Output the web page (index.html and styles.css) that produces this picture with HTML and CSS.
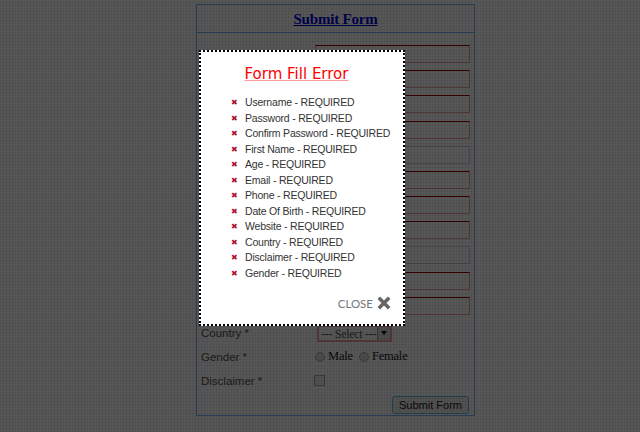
FILE: index.html
```html
<!DOCTYPE html>
<html lang="en">
<head>
    <meta charset="UTF-8">
    <title>Submit Form</title>
    <link rel="stylesheet" href="styles.css">
</head>
<body>
    <form class="signup">
        <h2 class="signup-title"><u>Submit Form</u></h2>
        <div class="fields">
            <label class="row"><span>Username *</span><input type="text" class="invalid"></label>
            <label class="row"><span>Password *</span><input type="text" class="invalid"></label>
            <label class="row"><span>Confirm Password *</span><input type="text" class="invalid"></label>
            <label class="row"><span>First Name *</span><input type="text" class="invalid"></label>
            <label class="row"><span>Last Name</span><input type="text"></label>
            <label class="row"><span>Age *</span><input type="text" class="invalid"></label>
            <label class="row"><span>Email *</span><input type="text" class="invalid"></label>
            <label class="row"><span>Phone *</span><input type="text" class="invalid"></label>
            <label class="row"><span>Address</span><input type="text"></label>
            <label class="row"><span>Date Of Birth *</span><input type="text" class="invalid"></label>
            <label class="row"><span>Website *</span><input type="text" class="invalid"></label>
            <label class="row row-country"><span>Country *</span>
                <div class="select">
                    <select><option>--- Select ---</option></select>
                    <i class="select-arrow"></i>
                </div>
            </label>
            <div class="row row-short"><span>Gender *</span>
                <div class="radios">
                    <input type="radio" name="gender" id="male"><label for="male">Male</label>
                    <input type="radio" name="gender" id="female"><label for="female">Female</label>
                </div>
            </div>
            <label class="row row-short"><span>Disclaimer *</span><input type="checkbox" class="agree"></label>
        </div>
        <div class="actions"><button type="button">Submit Form</button></div>
    </form>

    <div class="overlay">
        <div class="modal">
            <h3 class="modal-title">Form Fill Error</h3>
            <ul class="errors">
                <li>Username - REQUIRED</li>
                <li>Password - REQUIRED</li>
                <li>Confirm Password - REQUIRED</li>
                <li>First Name - REQUIRED</li>
                <li>Age - REQUIRED</li>
                <li>Email - REQUIRED</li>
                <li>Phone - REQUIRED</li>
                <li>Date Of Birth - REQUIRED</li>
                <li>Website - REQUIRED</li>
                <li>Country - REQUIRED</li>
                <li>Disclaimer - REQUIRED</li>
                <li>Gender - REQUIRED</li>
            </ul>
            <div class="modal-close">
                CLOSE
                <svg width="14" height="14" viewBox="0 0 14 14"><path d="M1.8 1.8l10.4 10.4M12.2 1.8L1.8 12.2" stroke="#666" stroke-width="3.6"/></svg>
            </div>
        </div>
    </div>
</body>
</html>
```

FILE: styles.css
```css
html, body {
    margin: 0;
    height: 100%;
    overflow: hidden;
}

body {
    background: #fff;
    font-family: "Liberation Serif", serif;
}

.signup {
    width: 277px;
    height: 410px;
    margin: 4px 0 0 196px;
    border: 1px solid #7ab4ff;
}

.signup-title {
    margin: 0;
    height: 27px;
    border-bottom: 1px solid #7ab4ff;
    text-align: center;
    font-size: 15px;
    letter-spacing: -0.2px;
    line-height: 29px;
    color: #0000e0;
}

.fields {
    padding-top: 8.4px;
}

.row {
    display: flex;
    align-items: center;
    height: 25.2px;
    padding-left: 4px;
    font-family: "Liberation Sans", sans-serif;
    font-size: 11.5px;
    color: #555;
}

.row-country {
    height: 23.2px;
    padding-top: 3px;
}

.row-short {
    height: 24px;
}

.row > span {
    width: 114px;
    flex: none;
}

.row input[type=text] {
    width: 155px;
    height: 18px;
    box-sizing: border-box;
    border: 1px solid #ccc;
    padding: 0;
}

.row input.invalid {
    border: 1px solid #f3a0a0;
    border-top-color: #900;
}

.select {
    display: flex;
    width: 75px;
    height: 17px;
    margin-left: 2px;
    box-sizing: border-box;
    border: 2px solid #f3a0a0;
    background: #fff;
}

.select select {
    flex: 1;
    min-width: 0;
    padding: 0 0 0 2px;
    border: 0;
    appearance: none;
    background: #fff;
    font-family: "Liberation Serif", serif;
    font-size: 12px;
    letter-spacing: -0.3px;
    color: #555;
}

.select-arrow {
    display: flex;
    flex: none;
    align-items: center;
    justify-content: center;
    width: 12px;
    border-left: 1px solid #999;
    background: #ddd;
}

.select-arrow::after {
    content: "";
    border: 3px solid transparent;
    border-top: 4px solid #000;
    border-bottom: 0;
}

.radios {
    display: flex;
    align-items: center;
    font-family: "Liberation Serif", serif;
    font-size: 12.5px;
    letter-spacing: -0.2px;
    color: #222;
}

.radios input {
    width: 10px;
    height: 10px;
    margin: 0 3px 0 0;
    appearance: none;
    box-sizing: border-box;
    border: 1px solid #aaa;
    border-radius: 50%;
    background: #ddd;
}

.radios label {
    margin-right: 6px;
}

.agree {
    width: 11px;
    height: 11px;
    margin: 0 0 0 -1px;
    appearance: none;
    box-sizing: border-box;
    border: 1px solid #aaa;
    background: #eee;
}

.actions {
    display: flex;
    justify-content: flex-end;
    padding: 3.2px 5px 0 0;
}

.actions button {
    width: 77px;
    height: 18px;
    padding: 0;
    font-family: "Liberation Sans", sans-serif;
    font-size: 11px;
    color: #222;
    background: #eee;
    border: 1px solid #5ac0e8;
    border-radius: 3px;
}

.overlay {
    position: fixed;
    inset: 0;
    background-color: rgba(0, 0, 0, 0.66);
    background-image:
        repeating-linear-gradient(90deg, rgba(0,0,0,.06) 0 1px, transparent 1px 3px),
        repeating-linear-gradient(0deg, rgba(0,0,0,.06) 0 1px, transparent 1px 3px);
}

.modal {
    position: absolute;
    left: 199px;
    top: 50px;
    width: 206px;
    height: 276px;
    box-sizing: border-box;
    background: #fff;
    border: 2px dotted #000;
}

.modal-title {
    margin: 0;
    padding: 13px 11px 0 0;
    text-align: center;
    font-family: "DejaVu Sans", sans-serif;
    font-size: 15px;
    font-weight: normal;
    line-height: 18px;
    color: #f00;
    text-decoration: underline #f99;
}

.errors {
    list-style: none;
    margin: 12px 0 0;
    padding: 0 0 0 44px;
    font-family: "Liberation Sans", sans-serif;
    font-size: 10.5px;
    letter-spacing: -0.2px;
    color: #333;
}

.errors li {
    position: relative;
    height: 15.5px;
    line-height: 15.5px;
    white-space: nowrap;
}

.errors li::before {
    content: "\2716";
    position: absolute;
    left: -14px;
    font-size: 8px;
    color: #b01030;
}

.modal-close {
    display: flex;
    align-items: center;
    justify-content: flex-end;
    gap: 4px;
    margin: 15px 12px 0 0;
    font-family: Lato, sans-serif;
    font-size: 11.5px;
    color: #777;
}
```
